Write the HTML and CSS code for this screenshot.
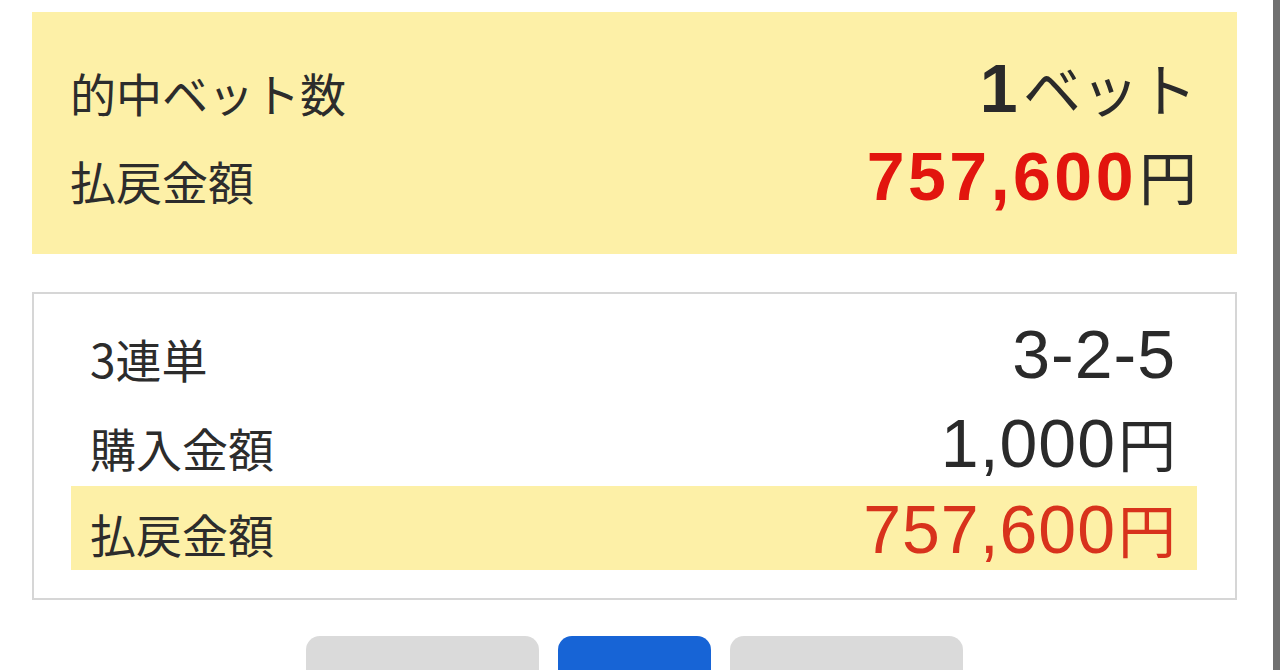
FILE: index.html
```html
<!DOCTYPE html>
<html lang="ja">
<head>
<meta charset="utf-8">
<link rel="stylesheet" href="styles.css">
</head>
<body>
<div class="page">
  <main class="content">
    <section class="summary">
      <div class="row">
        <span class="label">的中ベット数</span>
        <span class="value"><b class="num-bold">1</b><span class="unit">ベット</span></span>
      </div>
      <div class="row">
        <span class="label">払戻金額</span>
        <span class="value"><b class="num-bold red">757,600</b><span class="unit">円</span></span>
      </div>
    </section>

    <section class="detail">
      <div class="row">
        <span class="label">3連単</span>
        <span class="value"><span class="num">3-2-5</span></span>
      </div>
      <div class="row">
        <span class="label">購入金額</span>
        <span class="value"><span class="num">1,000</span><span class="unit">円</span></span>
      </div>
      <div class="row highlight">
        <span class="label">払戻金額</span>
        <span class="value red-light"><span class="num">757,600</span><span class="unit">円</span></span>
      </div>
    </section>

    <div class="buttons">
      <div class="btn btn-gray"></div>
      <div class="btn btn-blue"></div>
      <div class="btn btn-gray"></div>
    </div>
  </main>
  <div class="edge"></div>
</div>
</body>
</html>
```

FILE: styles.css
```css
html, body {
  margin: 0;
  padding: 0;
  background: #ffffff;
}

body {
  font-family: "Liberation Sans", "Noto Sans CJK JP", sans-serif;
  color: #2a2a2a;
  overflow: hidden;
}

.page {
  display: flex;
  width: 1280px;
  height: 670px;
  overflow: hidden;
}

.content {
  width: 1205px;
  padding: 12px 36px 0 32px;
  display: flex;
  flex-direction: column;
}

.edge {
  width: 7px;
  background: #707070;
}

.row {
  display: flex;
  justify-content: space-between;
  align-items: baseline;
  height: 88px;
  line-height: 88px;
}

.label {
  font-family: "Noto Sans CJK JP", sans-serif;
  font-size: 46px;
  color: #2c2c2c;
}

.value {
  font-size: 68px;
  color: #2a2a2a;
  white-space: nowrap;
}

.num-bold {
  font-weight: 700;
  letter-spacing: 3.5px;
}

.num {
  font-weight: 400;
  letter-spacing: 1px;
}

.unit {
  font-family: "Noto Sans CJK JP", sans-serif;
  font-size: 58px;
  font-weight: 400;
  color: #2a2a2a;
  margin-left: 2px;
}

.red {
  color: #e2150e;
}

.red-light .num,
.red-light .unit {
  color: #d8321c;
}

.summary {
  background: #fdf0a7;
  padding: 31px 40px 35px 38px;
}

.detail {
  margin-top: 38px;
  border: 2px solid #d6d6d6;
  padding: 16px 38px 28px 37px;
}

.detail .row {
  padding: 0 21px 0 19px;
}

.detail .row.highlight {
  background: #fdf0a7;
  height: 84px;
  line-height: 84px;
}

.buttons {
  display: flex;
  justify-content: center;
  gap: 19px;
  margin-top: 36px;
}

.btn {
  height: 60px;
  border-radius: 14px;
}

.btn-gray {
  width: 233px;
  background: #dadada;
}

.btn-blue {
  width: 153px;
  background: #1764d6;
}
```
